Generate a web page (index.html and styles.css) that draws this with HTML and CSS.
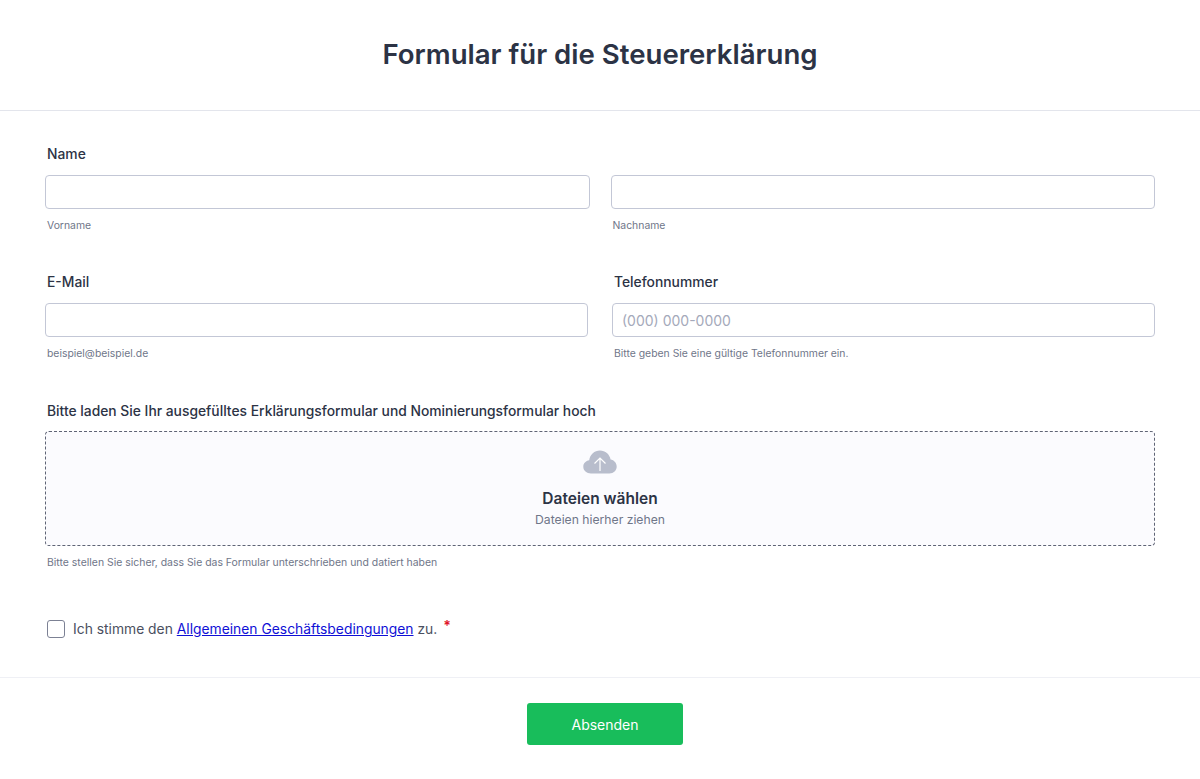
FILE: index.html
```html
<!DOCTYPE html>
<html lang="de">

<head>
    <meta charset="UTF-8">
    <meta name="viewport" content="width=device-width, initial-scale=1.0">
    <title>Formular für die Steuererklärung</title>
    <link rel="stylesheet" href="styles.css">
</head>

<body>

    <form class="formular">
        <header class="kopf">
            <h1>Formular für die Steuererklärung</h1>
        </header>

        <div class="inhalt">
            <div class="feld feld-name">
                <label class="titel">Name</label>
                <div class="zeile zeile-name">
                    <div class="spalte">
                        <input class="eingabe" type="text">
                        <span class="hinweis">Vorname</span>
                    </div>
                    <div class="spalte">
                        <input class="eingabe" type="text">
                        <span class="hinweis">Nachname</span>
                    </div>
                </div>
            </div>

            <div class="zeile zeile-kontakt">
                <div class="spalte">
                    <label class="titel">E-Mail</label>
                    <input class="eingabe" type="email">
                    <span class="hinweis">beispiel@beispiel.de</span>
                </div>
                <div class="spalte">
                    <label class="titel">Telefonnummer</label>
                    <input class="eingabe" type="tel" placeholder="(000) 000-0000">
                    <span class="hinweis">Bitte geben Sie eine gültige Telefonnummer ein.</span>
                </div>
            </div>

            <div class="feld feld-upload">
                <label class="titel">Bitte laden Sie Ihr ausgefülltes Erklärungsformular und Nominierungsformular hoch</label>
                <div class="upload">
                    <svg class="wolke" width="34" height="24" viewBox="0 0 34 24">
                        <path d="M8 23.5C3.6 23.5 0.3 20.6 0.3 16.8C0.3 13.4 2.8 10.8 6.2 10.3C7 4.7 11.4 0.6 17 0.6C22.3 0.6 26.6 4.4 27.6 9.6C31 10.2 33.7 13 33.7 16.6C33.7 20.6 30.6 23.5 26.4 23.5Z" fill="#b8bdcc" />
                        <path d="M17 21V8M11.5 13.5L17 8L22.5 13.5" fill="none" stroke="#fff" stroke-width="1.2" />
                    </svg>
                    <span class="upload-titel">Dateien wählen</span>
                    <span class="upload-text">Dateien hierher ziehen</span>
                </div>
                <span class="hinweis">Bitte stellen Sie sicher, dass Sie das Formular unterschrieben und datiert haben</span>
            </div>

            <div class="zustimmung">
                <input class="kasten" type="checkbox">
                <span>Ich stimme den <a href="#">Allgemeinen Geschäftsbedingungen</a> zu.</span>
                <span class="pflicht">*</span>
            </div>
        </div>

        <footer class="fuss">
            <button class="absenden" type="button">Absenden</button>
        </footer>
    </form>

</body>

</html>
```

FILE: styles.css
```css
* {
    box-sizing: border-box;
}

body {
    font-family: Inter, "Liberation Sans", sans-serif;
    margin: 0;
    background-color: #fff;
    color: #2c3345;
}

.formular {
    display: flex;
    flex-direction: column;
    height: 779px;
}

.kopf {
    height: 111px;
    padding-top: 36px;
    border-bottom: 1px solid #e3e5ec;
    text-align: center;
}

h1 {
    margin: 0;
    font-size: 27.6px;
    line-height: 37px;
    font-weight: 600;
}

.inhalt {
    padding: 35px 45px 0;
    height: 567px;
    border-bottom: 1px solid #eff0f5;
}

.titel {
    display: block;
    font-size: 13.85px;
    line-height: 17px;
    font-weight: 500;
    padding-left: 2px;
    margin-bottom: 12px;
}

.zeile {
    display: flex;
}

.zeile-name {
    gap: 21px;
}

.zeile-name .spalte {
    width: 545px;
}

.zeile-kontakt {
    margin-top: 42px;
    gap: 24px;
    justify-content: space-between;
}

.zeile-kontakt .spalte {
    width: 543px;
}

.eingabe {
    display: block;
    width: 100%;
    height: 34px;
    border: 1px solid #c3c7d6;
    border-radius: 4px;
    background-color: #fff;
    padding: 0 9px;
    font-family: inherit;
    font-size: 14px;
}

.eingabe::placeholder {
    color: #a4a9ba;
}

.hinweis {
    display: block;
    font-size: 10.4px;
    line-height: 13px;
    color: #6f7689;
    padding-left: 2px;
    margin-top: 10px;
}

.feld-upload {
    margin-top: 43px;
}

.feld-upload .titel {
    margin-bottom: 11px;
}

.feld-upload .hinweis {
    font-size: 10.45px;
}

.upload {
    display: flex;
    flex-direction: column;
    align-items: center;
    height: 115px;
    padding-top: 18px;
    border: 1px dashed #5f6475;
    border-radius: 4px;
    background-color: #fbfbfe;
}

.wolke {
    margin-bottom: 15px;
}

.upload-titel {
    font-size: 15.5px;
    line-height: 20px;
    font-weight: 600;
}

.upload-text {
    margin-top: 3px;
    font-size: 12.2px;
    line-height: 15px;
    color: #6f7689;
}

.zustimmung {
    display: flex;
    align-items: center;
    margin-top: 48px;
    padding-left: 2px;
    font-size: 13.85px;
    line-height: 18px;
    color: #4a4f60;
}

.kasten {
    appearance: none;
    width: 18px;
    height: 18px;
    margin: 0 8px 0 0;
    border: 1px solid #7c8194;
    border-radius: 3px;
    background-color: #fff;
}

.zustimmung a {
    color: #0f0fd6;
}

.pflicht {
    margin-left: 6px;
    margin-bottom: 6px;
    color: #e0162b;
    font-weight: 700;
}

.fuss {
    display: flex;
    justify-content: center;
    padding: 25px 0 0 10px;
}

.absenden {
    width: 156px;
    height: 42px;
    border: none;
    border-radius: 3px;
    background-color: #18bd5b;
    color: #fff;
    font-family: inherit;
    font-size: 14px;
    font-weight: 400;
}
```
